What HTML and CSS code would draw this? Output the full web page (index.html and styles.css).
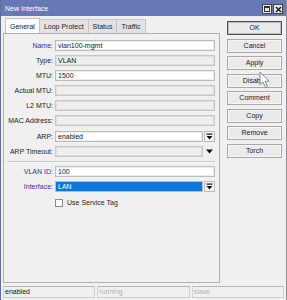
FILE: index.html
```html
<!DOCTYPE html>
<html>
<head>
<meta charset="utf-8">
<link rel="stylesheet" href="styles.css">
</head>
<body>
<div class="window">
  <div class="titlebar">
    <span class="title">New Interface</span>
    <div class="tb-btns">
      <span class="tb-btn"><span class="max-icon"></span></span>
      <span class="tb-btn close">
        <svg width="7" height="7" viewBox="0 0 7 7"><path d="M1 1L6 6M6 1L1 6" stroke="#222" stroke-width="1.6"/></svg>
      </span>
    </div>
  </div>
  <div class="main">
    <div class="left">
      <div class="tabs">
        <div class="tab active">General</div>
        <div class="tab">Loop Protect</div>
        <div class="tab">Status</div>
        <div class="tab">Traffic</div>
      </div>
      <div class="panel">
        <div class="row"><span class="lbl blue">Name:</span><div class="field">vlan100-mgmt</div></div>
        <div class="row"><span class="lbl">Type:</span><div class="field ro">VLAN</div></div>
        <div class="row"><span class="lbl">MTU:</span><div class="field">1500</div></div>
        <div class="row"><span class="lbl">Actual MTU:</span><div class="field ro"></div></div>
        <div class="row"><span class="lbl">L2 MTU:</span><div class="field ro"></div></div>
        <div class="row"><span class="lbl">MAC Address:</span><div class="field ro"></div></div>
        <div class="row gap-top"><span class="lbl">ARP:</span><div class="combo"><div class="field">enabled</div><span class="dd-btn"><svg width="7" height="7" viewBox="0 0 7 7"><rect x="0.5" y="0.5" width="6" height="1.2" fill="#111"/><path d="M0.5 3H6.5L3.5 6.5Z" fill="#111"/></svg></span></div></div>
        <div class="row"><span class="lbl">ARP Timeout:</span><div class="combo"><div class="field ro"></div><span class="dd-arrow"><svg width="7" height="5" viewBox="0 0 7 5"><path d="M0 0.5H7L3.5 4.5Z" fill="#111"/></svg></span></div></div>
        <div class="sep"></div>
        <div class="row"><span class="lbl blue">VLAN ID:</span><div class="field">100</div></div>
        <div class="row"><span class="lbl blue">Interface:</span><div class="combo"><div class="field sel">LAN</div><span class="dd-btn"><svg width="7" height="7" viewBox="0 0 7 7"><rect x="0.5" y="0.5" width="6" height="1.2" fill="#111"/><path d="M0.5 3H6.5L3.5 6.5Z" fill="#111"/></svg></span></div></div>
        <div class="row check-row"><span class="lbl"></span><span class="checkbox"></span><span class="check-label">Use Service Tag</span></div>
      </div>
    </div>
    <div class="buttons">
      <div class="btn default">OK</div>
      <div class="btn">Cancel</div>
      <div class="btn">Apply</div>
      <div class="btn">Disable</div>
      <div class="btn">Comment</div>
      <div class="btn">Copy</div>
      <div class="btn">Remove</div>
      <div class="btn">Torch</div>
    </div>
  </div>
  <div class="statusbar">
    <div class="status">enabled</div>
    <div class="status dim">running</div>
    <div class="status dim">slave</div>
  </div>
  <svg class="cursor" width="12" height="18" viewBox="0 0 12 18"><path d="M1 1V14L4 11L6.5 16.5L8.5 15.6L6 10.2H10Z" fill="#fff" stroke="#8a8a8a" stroke-width="1"/></svg>
</div>
</body>
</html>
```
FILE: styles.css
```css
* { box-sizing: border-box; }
html, body { margin: 0; padding: 0; }
body {
  width: 287px;
  height: 300px;
  overflow: hidden;
  font-family: "Liberation Sans", Arial, sans-serif;
  font-size: 7px;
  color: #111;
  background: #f0f0f0;
}
.window {
  position: relative;
  width: 287px;
  height: 300px;
  background: #f0f0f0;
  border-left: 1px solid #5f6f9c;
  border-right: 1px solid #8a8fa6;
  display: flex;
  flex-direction: column;
}
.titlebar {
  height: 16px;
  flex: none;
  background: #6878b6;
  display: flex;
  align-items: center;
  justify-content: space-between;
  padding: 0 3px 0 4px;
}
.title {
  color: #fff;
  font-size: 7px;
  padding-top: 1px;
}
.tb-btns {
  display: flex;
  gap: 1px;
  margin-top: 2px;
}
.tb-btn {
  width: 10px;
  height: 10px;
  background: #e8e8e8;
  border: 1px solid #444;
  display: flex;
  align-items: center;
  justify-content: center;
}
.max-icon {
  width: 6px;
  height: 6px;
  border: 1px solid #333;
  border-top-width: 2px;
}
.main {
  display: flex;
  flex: none;
  height: 268px;
}
.left {
  margin-left: 2px;
  width: 217px;
  display: flex;
  flex-direction: column;
}
.tabs {
  display: flex;
  margin-top: 2px;
  margin-left: 2px;
  height: 15px;
}
.tab {
  padding: 0 4px;
  height: 14px;
  margin-top: 1px;
  line-height: 13px;
  background: #e2e2e2;
  border: 1px solid #c4c4c4;
  border-bottom: none;
  margin-right: -1px;
  color: #222;
}
.tab.active {
  background: #fbfbfb;
  height: 15px;
  margin-top: 0;
  line-height: 15px;
  padding: 0 4px;
  position: relative;
  z-index: 1;
  margin-bottom: -1px;
}
.panel {
  height: 250px;
  border: 1px solid #b0b0b0;
  background: #f0f0f0;
  padding: 6px 4px 0 0;
  display: flex;
  flex-direction: column;
  gap: 4px;
}
.row {
  display: flex;
  align-items: center;
  height: 11px;
}
.row.gap-top { margin-top: 1px; }
.lbl {
  width: 49px;
  flex: none;
  text-align: right;
  margin-right: 2px;
  color: #222;
  white-space: nowrap;
}
.lbl.blue { color: #3232a8; }
.field {
  flex: 1;
  height: 11px;
  background: #fff;
  border: 1px solid #bcbcbc;
  box-shadow: inset 0 0 0 1px #ececec;
  padding-left: 2px;
  line-height: 9px;
  white-space: nowrap;
  overflow: hidden;
}
.field.ro {
  background: #efefef;
  border-color: #c6c6c6;
  box-shadow: inset 0 0 0 1px #dedede;
}
.field.sel {
  background: #0a78d6;
  color: #fff;
  border-color: #bcbcbc;
  box-shadow: none;
}
.combo {
  flex: 1;
  display: flex;
  height: 11px;
}
.dd-btn {
  width: 11px;
  flex: none;
  margin-left: 1px;
  background: #f4f4f4;
  border: 1px solid #bcbcbc;
  display: flex;
  align-items: center;
  justify-content: center;
}
.dd-arrow {
  width: 12px;
  flex: none;
  display: flex;
  align-items: center;
  justify-content: center;
}
.sep {
  height: 1px;
  background: #c9c9c9;
  margin: 0 0 0 3px;
  box-shadow: 0 1px 0 #fafafa;
}
.check-row { margin-top: 1px; }
.checkbox {
  width: 8px;
  height: 8px;
  background: #fff;
  border: 1px solid #8a8a8a;
  flex: none;
}
.check-label {
  margin-left: 4px;
  color: #222;
}
.buttons {
  margin-left: 7px;
  padding-top: 5px;
  width: 55px;
  display: flex;
  flex-direction: column;
  gap: 3.5px;
}
.btn {
  height: 14px;
  background: #eaeaea;
  border: 1px solid #a8a8a8;
  box-shadow: inset 0 0 0 1px #f7f7f7;
  text-align: center;
  line-height: 12px;
  color: #222;
}
.btn.default {
  border: 1px solid #505050;
  box-shadow: inset 0 0 0 1px #bdbdbd;
}
.statusbar {
  display: flex;
  gap: 2px;
  padding: 2px 2px 0 2px;
  height: 14px;
}
.status {
  flex: 1;
  height: 12px;
  border: 1px solid #cfcfcf;
  border-top-color: #b8b8b8;
  background: #f0f0f0;
  padding-left: 1px;
  line-height: 10px;
  color: #111;
}
.status.dim { color: #b0b0b0; }
.cursor {
  position: absolute;
  left: 258px;
  top: 71px;
}
```
